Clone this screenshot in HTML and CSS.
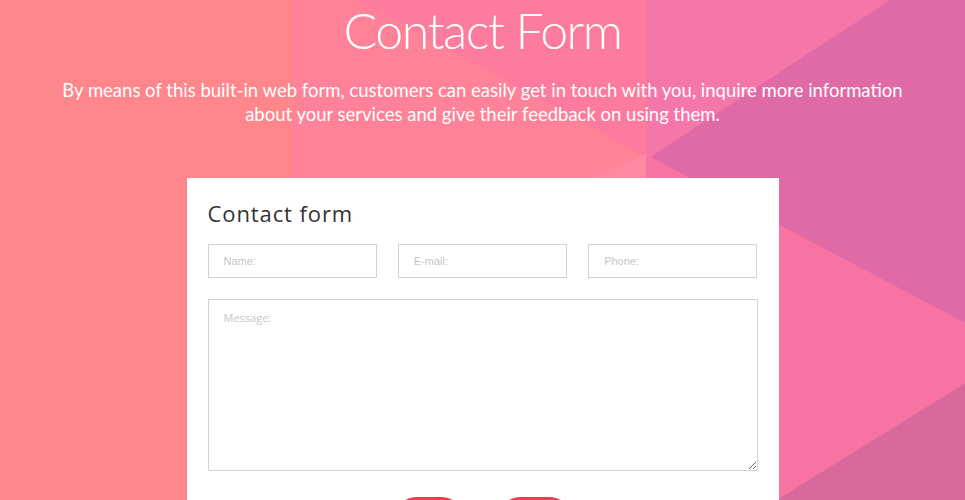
FILE: index.html
```html
<!DOCTYPE html>
<html lang="en">
<head>
<meta charset="utf-8">
<title>Contact Form</title>
<link rel="stylesheet" href="styles.css">
</head>
<body>
<header class="intro">
  <h1 class="intro-title">Contact Form</h1>
  <p class="intro-text">By means of this built-in web form, customers can easily get in touch with you, inquire more information<br>about your services and give their feedback on using them.</p>
</header>
<main class="card">
  <h2 class="card-title">Contact form</h2>
  <form class="form">
    <div class="form-row">
      <input class="field" type="text" placeholder="Name:">
      <input class="field" type="text" placeholder="E-mail:">
      <input class="field" type="text" placeholder="Phone:">
    </div>
    <textarea class="field field-message" placeholder="Message:"></textarea>
    <div class="form-actions">
      <button class="btn btn-send" type="button">Send</button>
      <button class="btn btn-reset" type="button">Reset</button>
    </div>
  </form>
</main>
</body>
</html>
```

FILE: styles.css
```css
html, body {
  margin: 0;
  padding: 0;
}

body {
  min-height: 500px;
  overflow: hidden;
  background-color: #ff8298;
  background-image: url("data:image/svg+xml,%3Csvg xmlns='http://www.w3.org/2000/svg' width='965' height='500' viewBox='0 0 965 500'%3E%3Crect width='965' height='500' fill='%23ff8298'/%3E%3Cpolygon points='0,0 293,0 293,500 0,500' fill='%23ff868a'/%3E%3Cpolygon points='0,0 150,0 0,160' fill='%23ff888c'/%3E%3Cpolygon points='357,0 646,0 646,157' fill='%23fd7c9e'/%3E%3Cpolygon points='590,178 650,152 650,178' fill='%23ff89a0'/%3E%3Cpolygon points='646,0 890,0 650,157 646,157' fill='%23f577aa'/%3E%3Cpolygon points='890,0 965,0 965,323 650,157' fill='%23e06aa5'/%3E%3Cpolygon points='646,157 650,157 965,323 965,383 777,500 646,500' fill='%23f773a3'/%3E%3Cpolygon points='965,383 965,500 777,500' fill='%23d9699c'/%3E%3C/svg%3E");
  background-repeat: no-repeat;
  background-position: 0 0;
}

.intro {
  text-align: center;
  color: #ffffff;
}

.intro-title {
  margin: 0;
  font-family: Lato, "Open Sans", sans-serif;
  font-weight: 300;
  font-size: 50px;
  letter-spacing: -1.5px;
  line-height: 60px;
}

.intro-text {
  margin: 18px 0 0;
  font-family: Lato, "Open Sans", sans-serif;
  font-weight: 400;
  font-size: 18.5px;
  line-height: 24px;
}

.card {
  box-sizing: border-box;
  width: 592px;
  margin: 52px auto 0;
  padding: 20px 21px 40px;
  background: #ffffff;
}

.card-title {
  margin: 0;
  font-family: "Open Sans", sans-serif;
  font-weight: 400;
  font-size: 22px;
  letter-spacing: 0.9px;
  line-height: 30px;
  color: #333333;
}

.form {
  margin-top: 16px;
}

.form-row {
  display: grid;
  grid-template-columns: repeat(3, 1fr);
  gap: 21px;
}

.field {
  box-sizing: border-box;
  display: block;
  width: 100%;
  height: 34px;
  margin: 0;
  padding: 0 15px;
  border: 1px solid #d2d2d2;
  border-radius: 0;
  background: #ffffff;
  font-family: "Liberation Sans", Arial, sans-serif;
  font-size: 11px;
  color: #555555;
  outline: none;
}

.field::placeholder {
  color: #c6c6c6;
}

.field-message {
  height: 172px;
  margin-top: 21px;
  padding: 10px 15px;
  font-family: "Open Sans", sans-serif;
  font-size: 11px;
  resize: vertical;
}

.form-actions {
  display: flex;
  justify-content: center;
  gap: 38px;
  margin-top: 26px;
}

.btn {
  box-sizing: border-box;
  height: 40px;
  padding: 14px 0 0;
  border: none;
  border-radius: 20px;
  background: #e8414e;
  color: #ffffff;
  font-family: "Open Sans", sans-serif;
  font-size: 13px;
  line-height: 16px;
}

.btn-send {
  width: 66px;
}

.btn-reset {
  width: 70px;
}
```
